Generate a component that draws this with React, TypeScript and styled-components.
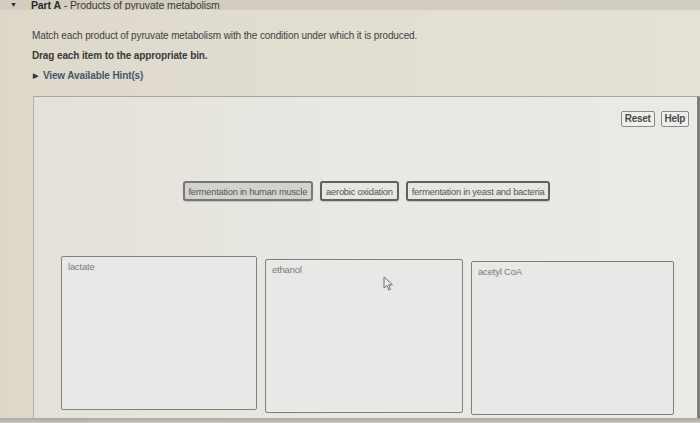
import React from "react";
import styled, { createGlobalStyle } from "styled-components";

const Global = createGlobalStyle`
  html, body { margin: 0; padding: 0; }
  body {
    width: 700px;
    height: 423px;
    overflow: hidden;
    background: linear-gradient(90deg, #ddd8ca 0%, #e2ded2 50%, #e4e1d7 100%);
    font-family: "Liberation Sans", Arial, sans-serif;
  }
`;

const Page = styled.div`
  position: relative;
  width: 700px;
  height: 423px;
  display: flex;
  flex-direction: column;
`;

const Header = styled.div`
  height: 10px;
  overflow: hidden;
  background: #d2cdbf;
  display: flex;
  align-items: flex-start;
  padding-left: 10px;
  color: #333;
  font-size: 10.5px;
  line-height: 10px;
`;

const HeaderInner = styled.div`
  display: flex;
  gap: 14px;
  align-items: center;
`;

const Caret = styled.span`
  font-size: 7px;
  color: #2a2a2a;
`;

const HeaderTitle = styled.span`
  letter-spacing: -0.1px;
  color: #3a3a3a;
  b { color: #2a2a2a; }
`;

const Intro = styled.div`
  padding: 20px 0 0 32px;
  display: flex;
  flex-direction: column;
  gap: 8px;
  font-size: 10px;
  line-height: 12px;
  letter-spacing: -0.12px;
  color: #3f3f3f;
`;

const Strong = styled.div`
  font-weight: bold;
  color: #3a3a3a;
`;

const Hint = styled.div`
  display: flex;
  align-items: center;
  gap: 5px;
  font-weight: bold;
  color: #45566a;
`;

const HintCaret = styled.span`
  font-size: 7px;
  color: #333;
  padding-left: 1px;
`;

const Panel = styled.div`
  margin: 14px 0 0 33px;
  flex: 1;
  background: linear-gradient(90deg, #e3e1d8 0%, #e9e8e3 50%, #eaeae6 100%);
  border-top: 1px solid #a9a69c;
  border-left: 1px solid #b3b0a6;
  border-right: 3px solid #7d7c78;
  display: flex;
  flex-direction: column;
  padding: 14px 8px 0 27px;
  box-sizing: border-box;
`;

const Toolbar = styled.div`
  display: flex;
  justify-content: flex-end;
  gap: 6px;
`;

const ToolButton = styled.button`
  font-family: "Liberation Sans", Arial, sans-serif;
  font-size: 10px;
  font-weight: bold;
  color: #4a4a4a;
  background: #efefec;
  border: 1.5px solid #8a8a86;
  border-radius: 2px;
  padding: 1px 3px;
  height: 16px;
  line-height: 12px;
  letter-spacing: -0.3px;
`;

const ChipRow = styled.div`
  display: flex;
  justify-content: center;
  gap: 7px;
  margin-top: 54px;
  padding-right: 17px;
`;

const Chip = styled.div<{ $active?: boolean }>`
  height: 20px;
  box-sizing: border-box;
  display: flex;
  align-items: center;
  padding: 0 4px;
  font-size: 9.4px;
  letter-spacing: -0.25px;
  color: #555;
  background: ${(p) => (p.$active ? "#d3d2cd" : "#e6e6e3")};
  border: 2px solid ${(p) => (p.$active ? "#77767a" : "#5e6066")};
  border-radius: 3px;
  box-shadow: 0 1px 1px rgba(0, 0, 0, 0.15);
`;

const Bins = styled.div`
  display: grid;
  grid-template-columns: 196px 198px 203px;
  gap: 8px;
  margin-top: 55px;
  align-items: start;
`;

const Bin = styled.div<{ $shift: number }>`
  height: 154px;
  margin-top: ${(p) => p.$shift}px;
  border: 1.5px solid #7f7f80;
  border-radius: 2px;
  background: #e8e8e6;
  padding: 4px 6px;
  box-sizing: border-box;
  font-size: 9.5px;
  color: #7a7a7a;
  letter-spacing: -0.2px;
`;

const Footer = styled.div`
  height: 5px;
  background: linear-gradient(180deg, #a9a7a0 0%, #c9c6bd 100%);
`;

const Cursor = styled.svg`
  position: absolute;
  left: 383px;
  top: 276px;
`;

export default function App() {
  return (
    <>
      <Global />
      <Page>
        <Header>
          <HeaderInner>
            <Caret>▼</Caret>
            <HeaderTitle>
              <b>Part A</b> - Products of pyruvate metabolism
            </HeaderTitle>
          </HeaderInner>
        </Header>
        <Intro>
          <div>Match each product of pyruvate metabolism with the condition under which it is produced.</div>
          <Strong>Drag each item to the appropriate bin.</Strong>
          <Hint>
            <HintCaret>▶</HintCaret>
            <span>View Available Hint(s)</span>
          </Hint>
        </Intro>
        <Panel>
          <Toolbar>
            <ToolButton>Reset</ToolButton>
            <ToolButton>Help</ToolButton>
          </Toolbar>
          <ChipRow>
            <Chip $active>fermentation in human muscle</Chip>
            <Chip>aerobic oxidation</Chip>
            <Chip>fermentation in yeast and bacteria</Chip>
          </ChipRow>
          <Bins>
            <Bin $shift={0}>lactate</Bin>
            <Bin $shift={3}>ethanol</Bin>
            <Bin $shift={5}>acetyl CoA</Bin>
          </Bins>
        </Panel>
        <Footer />
        <Cursor width="12" height="16" viewBox="0 0 12 16">
          <path d="M1 1 L1 12 L3.8 9.4 L5.8 14 L7.6 13.2 L5.6 8.8 L9.4 8.8 Z" fill="#f4f4f2" stroke="#6a6a6a" strokeWidth="1" strokeLinejoin="round" />
        </Cursor>
      </Page>
    </>
  );
}
